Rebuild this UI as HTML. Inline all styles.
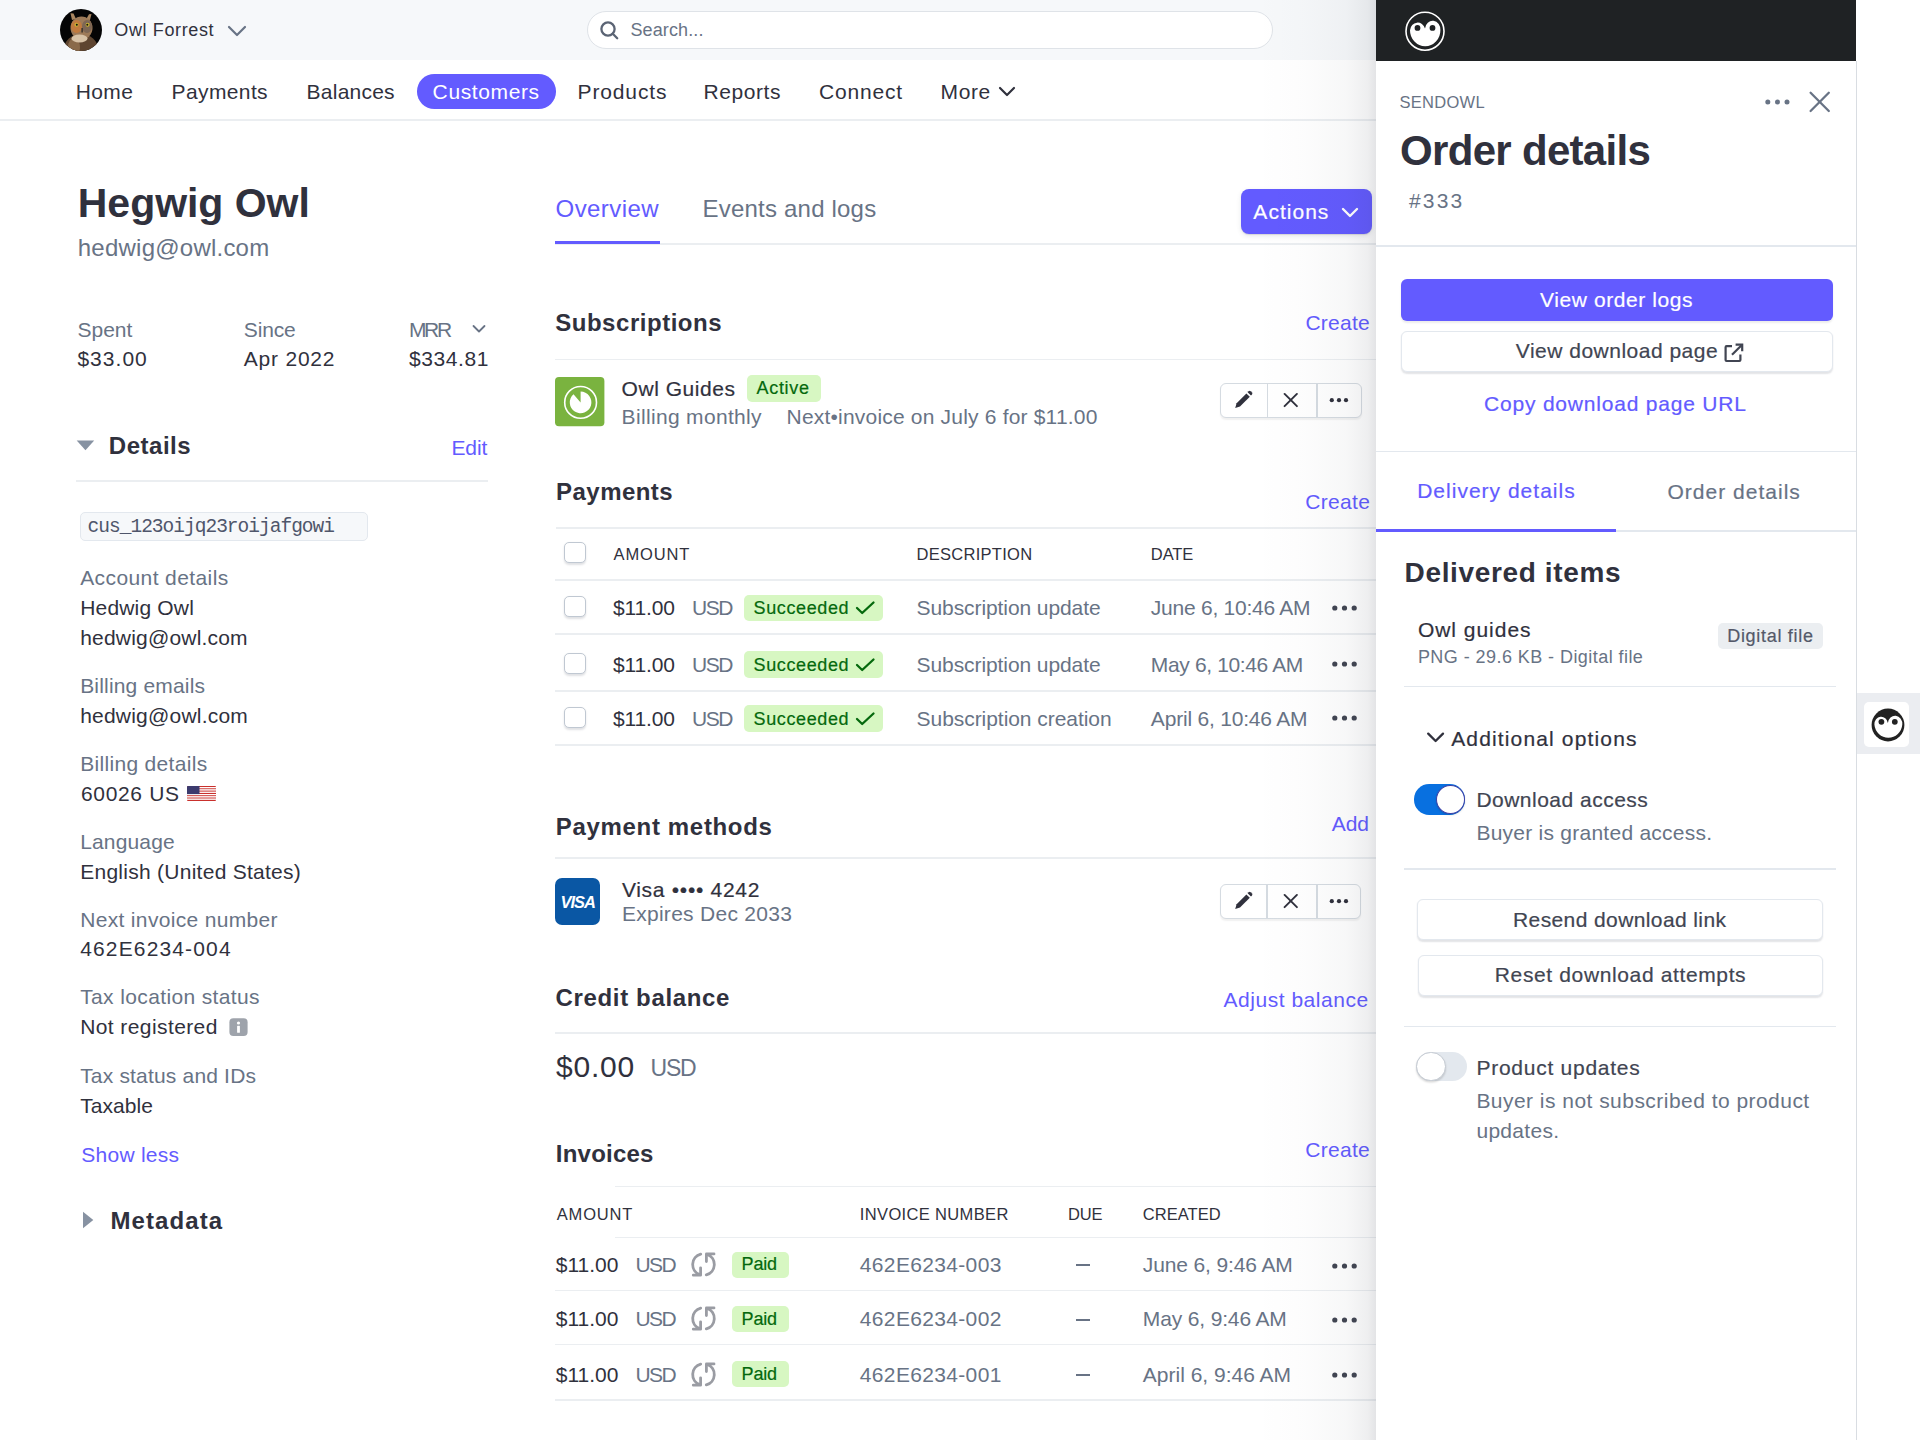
<!DOCTYPE html>
<html><head><meta charset="utf-8"><title>Customer</title>
<style>
html,body{margin:0;padding:0;width:1920px;height:1440px;overflow:hidden;background:#fff;}
body{position:relative;font-family:"Liberation Sans",sans-serif;}
.t{position:absolute;line-height:1;white-space:nowrap;}
.r{position:absolute;box-sizing:border-box;}
</style></head><body>
<div class="r" style="left:0px;top:0px;width:1376px;height:60px;background:#f6f8fa;"></div>
<svg class="r" style="left:60px;top:9px;" width="42" height="42" viewBox="0 0 42 42"><defs><clipPath id="av"><circle cx="21" cy="21" r="21"/></clipPath></defs><g clip-path="url(#av)"><rect width="42" height="42" fill="#050505"/><ellipse cx="21" cy="40" rx="17" ry="15" fill="#5e4530"/><ellipse cx="14" cy="38" rx="6" ry="9" fill="#8a6a4a"/><polygon points="10.5,4.2 13.5,4.5 16,10 12,11" fill="#a98660"/><polygon points="31.5,5 29,5.2 26,10.5 30,11" fill="#a98660"/><ellipse cx="21.5" cy="19" rx="11" ry="11.5" fill="#9d7a58"/><ellipse cx="16.5" cy="17.5" rx="5.5" ry="6.5" fill="#c07a3e"/><ellipse cx="27" cy="17.5" rx="5" ry="6.5" fill="#7d6654"/><ellipse cx="19.5" cy="29.5" rx="8" ry="4" fill="#d7c2a6"/><circle cx="16.5" cy="15.8" r="2" fill="#c8b230"/><circle cx="16.8" cy="15.8" r="1" fill="#111"/><circle cx="27.6" cy="15.8" r="2" fill="#c8b230"/><circle cx="27.3" cy="15.8" r="1" fill="#111"/><rect x="21.5" y="19" width="1.2" height="4.5" fill="#222"/></g></svg>
<div class="t" style="left:114.35px;top:20.76px;font-size:18px;color:#30313d;letter-spacing:0.620px;">Owl Forrest</div>
<svg class="r" style="left:226px;top:24px;" width="22" height="14" viewBox="0 0 22 14"><polyline points="3,3 11,11 19,3" fill="none" stroke="#687385" stroke-width="2.2" stroke-linecap="round" stroke-linejoin="round"/></svg>
<div class="r" style="left:587px;top:11px;width:686px;height:37.5px;border-radius:19px;background:#fff;border:1.5px solid #dfe3e8;"></div>
<svg class="r" style="left:598px;top:19px;" width="22" height="22" viewBox="0 0 22 22"><circle cx="10" cy="10" r="6.6" fill="none" stroke="#5b6474" stroke-width="2.3"/><line x1="14.8" y1="14.8" x2="19.2" y2="19.2" stroke="#5b6474" stroke-width="2.3" stroke-linecap="round"/></svg>
<div class="t" style="left:630.40px;top:20.66px;font-size:18px;color:#687385;letter-spacing:0.119px;">Search...</div>
<div class="r" style="left:0px;top:119px;width:1376px;height:1.5px;background:#ebeef1;"></div>
<div class="t" style="left:75.85px;top:81.42px;font-size:21px;color:#30313d;letter-spacing:0.333px;">Home</div>
<div class="t" style="left:171.60px;top:81.42px;font-size:21px;color:#30313d;letter-spacing:0.379px;">Payments</div>
<div class="t" style="left:306.60px;top:81.42px;font-size:21px;color:#30313d;letter-spacing:0.229px;">Balances</div>
<div class="r" style="left:417.4px;top:74px;width:138.6px;height:34.6px;border-radius:17.3px;background:#635bff;"></div>
<div class="t" style="left:432.60px;top:81.42px;font-size:21px;color:#fff;letter-spacing:0.625px;">Customers</div>
<div class="t" style="left:577.60px;top:81.42px;font-size:21px;color:#30313d;letter-spacing:0.850px;">Products</div>
<div class="t" style="left:703.60px;top:81.42px;font-size:21px;color:#30313d;letter-spacing:0.542px;">Reports</div>
<div class="t" style="left:818.90px;top:81.42px;font-size:21px;color:#30313d;letter-spacing:0.850px;">Connect</div>
<div class="t" style="left:940.60px;top:81.42px;font-size:21px;color:#30313d;letter-spacing:0.583px;">More</div>
<svg class="r" style="left:997px;top:85px;" width="20" height="16" viewBox="0 0 20 16"><polyline points="3,3 10,10 17,3" fill="none" stroke="#30313d" stroke-width="2.2" stroke-linecap="round" stroke-linejoin="round"/></svg>
<div class="t" style="left:77.80px;top:183.09px;font-size:41px;color:#30313d;font-weight:700;letter-spacing:-0.039px;">Hegwig Owl</div>
<div class="t" style="left:77.80px;top:235.98px;font-size:24px;color:#687385;letter-spacing:0.227px;">hedwig@owl.com</div>
<div class="t" style="left:555.60px;top:197.18px;font-size:24px;color:#635bff;letter-spacing:0.414px;">Overview</div>
<div class="t" style="left:702.60px;top:197.18px;font-size:24px;color:#687385;letter-spacing:0.200px;">Events and logs</div>
<div class="r" style="left:555px;top:243px;width:821px;height:1.5px;background:#ebeef1;"></div>
<div class="r" style="left:555px;top:241px;width:105px;height:3px;background:#635bff;"></div>
<div class="r" style="left:1240.7px;top:189px;width:131px;height:45px;border-radius:8px;background:#635bff;box-shadow:0 2px 5px rgba(60,66,87,.12),0 1px 1px rgba(0,0,0,.1);"></div>
<div class="t" style="left:1253.35px;top:201.22px;font-size:21px;color:#fff;letter-spacing:1.025px;-webkit-text-stroke:0.2px #fff;">Actions</div>
<svg class="r" style="left:1340px;top:205px;" width="20" height="16" viewBox="0 0 20 16"><polyline points="3,4 10,11 17,4" fill="none" stroke="#fff" stroke-width="2.4" stroke-linecap="round" stroke-linejoin="round"/></svg>
<div class="t" style="left:77.40px;top:318.62px;font-size:21px;color:#687385;letter-spacing:0.025px;">Spent</div>
<div class="t" style="left:77.40px;top:347.72px;font-size:21px;color:#30313d;letter-spacing:1.030px;">$33.00</div>
<div class="t" style="left:243.80px;top:318.62px;font-size:21px;color:#687385;letter-spacing:-0.137px;">Since</div>
<div class="t" style="left:243.80px;top:347.72px;font-size:21px;color:#30313d;letter-spacing:0.779px;">Apr 2022</div>
<div class="t" style="left:408.90px;top:318.62px;font-size:21px;color:#687385;letter-spacing:-2.300px;">MRR</div>
<svg class="r" style="left:471px;top:322px;" width="16" height="14" viewBox="0 0 16 14"><polyline points="2.5,4 8,9.5 13.5,4" fill="none" stroke="#687385" stroke-width="1.8" stroke-linecap="round" stroke-linejoin="round"/></svg>
<div class="t" style="left:408.90px;top:347.72px;font-size:21px;color:#30313d;letter-spacing:0.600px;">$334.81</div>
<svg class="r" style="left:76px;top:440px;" width="20" height="12" viewBox="0 0 20 12"><polygon points="0.7,0.6 18.2,0.6 9.45,10.2" fill="#8792a2"/></svg>
<div class="t" style="left:108.80px;top:434.38px;font-size:24px;color:#30313d;font-weight:700;letter-spacing:0.517px;">Details</div>
<div class="t" style="left:451.50px;top:436.92px;font-size:21px;color:#635bff;letter-spacing:-0.133px;">Edit</div>
<div class="r" style="left:76px;top:480px;width:412px;height:1.5px;background:#ebeef1;"></div>
<div class="r" style="left:80px;top:511.8px;width:288px;height:29.2px;border-radius:5px;background:#f6f8fa;border:1.5px solid #e3e8ee;"></div>
<div class="t" style="left:87.60px;top:518.06px;font-size:19.5px;color:#4f566b;font-family:'Liberation Mono',monospace;letter-spacing:-0.989px;">cus_123oijq23roijafgowi</div>
<div class="t" style="left:80.20px;top:567.22px;font-size:21px;color:#687385;letter-spacing:0.400px;">Account details</div>
<div class="t" style="left:80.20px;top:597.02px;font-size:21px;color:#30313d;letter-spacing:0.183px;">Hedwig Owl</div>
<div class="t" style="left:80.20px;top:626.82px;font-size:21px;color:#30313d;letter-spacing:0.192px;">hedwig@owl.com</div>
<div class="t" style="left:80.20px;top:675.22px;font-size:21px;color:#687385;letter-spacing:0.173px;">Billing emails</div>
<div class="t" style="left:80.20px;top:705.02px;font-size:21px;color:#30313d;letter-spacing:0.208px;">hedwig@owl.com</div>
<div class="t" style="left:80.20px;top:753.02px;font-size:21px;color:#687385;letter-spacing:0.318px;">Billing details</div>
<div class="t" style="left:81.00px;top:782.62px;font-size:21px;color:#30313d;letter-spacing:0.657px;">60026 US</div>
<svg class="r" style="left:187px;top:786px;border-radius:1px;" width="29" height="15" viewBox="0 0 29 15"><rect x="0" y="0.000" width="29" height="1.154" fill="#c9302c"/><rect x="0" y="1.154" width="29" height="1.154" fill="#fff"/><rect x="0" y="2.308" width="29" height="1.154" fill="#c9302c"/><rect x="0" y="3.462" width="29" height="1.154" fill="#fff"/><rect x="0" y="4.615" width="29" height="1.154" fill="#c9302c"/><rect x="0" y="5.769" width="29" height="1.154" fill="#fff"/><rect x="0" y="6.923" width="29" height="1.154" fill="#c9302c"/><rect x="0" y="8.077" width="29" height="1.154" fill="#fff"/><rect x="0" y="9.231" width="29" height="1.154" fill="#c9302c"/><rect x="0" y="10.385" width="29" height="1.154" fill="#fff"/><rect x="0" y="11.538" width="29" height="1.154" fill="#c9302c"/><rect x="0" y="12.692" width="29" height="1.154" fill="#fff"/><rect x="0" y="13.846" width="29" height="1.154" fill="#c9302c"/><rect x="0" y="0" width="12.5" height="8.1" fill="#3c3b6e"/></svg>
<div class="t" style="left:80.20px;top:830.82px;font-size:21px;color:#687385;letter-spacing:0.150px;">Language</div>
<div class="t" style="left:80.20px;top:860.82px;font-size:21px;color:#30313d;letter-spacing:0.266px;">English (United States)</div>
<div class="t" style="left:80.20px;top:908.62px;font-size:21px;color:#687385;letter-spacing:0.333px;">Next invoice number</div>
<div class="t" style="left:80.20px;top:938.22px;font-size:21px;color:#30313d;letter-spacing:1.145px;">462E6234-004</div>
<div class="t" style="left:80.20px;top:986.22px;font-size:21px;color:#687385;letter-spacing:0.369px;">Tax location status</div>
<div class="t" style="left:80.20px;top:1016.22px;font-size:21px;color:#30313d;letter-spacing:0.408px;">Not registered</div>
<svg class="r" style="left:229px;top:1018px;" width="19" height="18" viewBox="0 0 19 18"><rect x="0.4" y="0.3" width="18.2" height="17.7" rx="4" fill="#9ea3ab"/><circle cx="9.5" cy="5" r="1.6" fill="#fff"/><rect x="8.1" y="7.8" width="2.8" height="7" rx="0.6" fill="#fff"/></svg>
<div class="t" style="left:80.20px;top:1065.22px;font-size:21px;color:#687385;letter-spacing:0.179px;">Tax status and IDs</div>
<div class="t" style="left:80.20px;top:1095.02px;font-size:21px;color:#30313d;letter-spacing:0.067px;">Taxable</div>
<div class="t" style="left:81.30px;top:1143.92px;font-size:21px;color:#635bff;letter-spacing:0.250px;">Show less</div>
<svg class="r" style="left:82px;top:1210px;" width="13" height="20" viewBox="0 0 13 20"><polygon points="1,1.7 11.3,10 1,18.3" fill="#8792a2"/></svg>
<div class="t" style="left:110.40px;top:1208.58px;font-size:24px;color:#30313d;font-weight:700;letter-spacing:1.114px;">Metadata</div>
<div class="t" style="left:555.20px;top:311.28px;font-size:24px;color:#30313d;font-weight:700;letter-spacing:0.533px;">Subscriptions</div>
<div class="t" style="left:1305.40px;top:312.42px;font-size:21px;color:#635bff;letter-spacing:0.270px;">Create</div>
<div class="r" style="left:555px;top:358.5px;width:821px;height:1.5px;background:#ebeef1;"></div>
<svg class="r" style="left:555px;top:376.5px;" width="50" height="50" viewBox="0 0 50 50"><rect x="0" y="0" width="49.4" height="49.3" rx="4" fill="#7ab33f"/><circle cx="25.6" cy="25.4" r="15.9" fill="none" stroke="#fff" stroke-width="1.6"/><path d="M25.6 25.4 L25.6 14.599999999999998 A10.8 10.8 0 1 1 18.51 17.25 Z" fill="#fff"/></svg>
<div class="t" style="left:621.60px;top:377.52px;font-size:21px;color:#30313d;letter-spacing:0.528px;-webkit-text-stroke:0.2px #30313d;">Owl Guides</div>
<div class="r" style="left:747px;top:375px;width:73.5px;height:26.6px;border-radius:5px;background:#d7f7c2;"></div>
<div class="t" style="left:756.60px;top:378.96px;font-size:18px;color:#05690d;letter-spacing:0.660px;-webkit-text-stroke:0.2px #05690d;">Active</div>
<div class="t" style="left:621.60px;top:406.42px;font-size:21px;color:#687385;letter-spacing:0.329px;">Billing monthly</div>
<div class="t" style="left:786.60px;top:406.42px;font-size:21px;color:#687385;letter-spacing:0.192px;">Next•invoice on July 6 for $11.00</div>
<div class="r" style="left:1220px;top:383.2px;width:141.5px;height:35px;border-radius:6px;background:#fff;border:1.5px solid #d5dbe1;box-shadow:0 1.5px 1.5px rgba(0,0,0,.06);"></div>
<div class="r" style="left:1266.6px;top:383.2px;width:1.5px;height:35px;background:#d5dbe1;"></div>
<div class="r" style="left:1316.2px;top:383.2px;width:1.5px;height:35px;background:#d5dbe1;"></div>
<svg class="r" style="left:1232px;top:389.4px;" width="22" height="22" viewBox="0 0 22 22"><path d="M3.2 19 L4.6 14.2 L14.4 4.4 L17.8 7.8 L8 17.6 Z" fill="#30313d"/><path d="M15.6 3.2 L16.6 2.2 Q17.6 1.4 18.6 2.2 L20 3.6 Q20.8 4.6 20 5.6 L19 6.6 Z" fill="#30313d"/></svg>
<svg class="r" style="left:1280px;top:391.4px;" width="18" height="18" viewBox="0 0 18 18"><line x1="4.6" y1="2.9" x2="16.9" y2="15.2" stroke="#30313d" stroke-width="1.9" stroke-linecap="round"/><line x1="16.9" y1="2.9" x2="4.6" y2="15.2" stroke="#30313d" stroke-width="1.9" stroke-linecap="round"/></svg>
<svg class="r" style="left:1324px;top:395.4px;" width="30" height="10" viewBox="0 0 30 10"><circle cx="7.8" cy="5.2" r="2.1" fill="#30313d"/><circle cx="15" cy="5.2" r="2.1" fill="#30313d"/><circle cx="22" cy="5.2" r="2.1" fill="#30313d"/></svg>
<div class="t" style="left:556.10px;top:480.48px;font-size:24px;color:#30313d;font-weight:700;letter-spacing:0.443px;">Payments</div>
<div class="t" style="left:1305.30px;top:490.97px;font-size:21px;color:#635bff;letter-spacing:0.310px;">Create</div>
<div class="r" style="left:556px;top:527px;width:820px;height:1.5px;background:#ebeef1;"></div>
<div class="r" style="left:563.5px;top:541.6px;width:22px;height:21.4px;border-radius:5px;background:#fff;border:1.5px solid #c0c8d2;box-shadow:0 1.5px 2px rgba(60,66,87,.16);"></div>
<div class="t" style="left:613.60px;top:545.83px;font-size:16.5px;color:#30313d;letter-spacing:0.840px;">AMOUNT</div>
<div class="t" style="left:916.60px;top:546.03px;font-size:16.5px;color:#30313d;letter-spacing:0.275px;">DESCRIPTION</div>
<div class="t" style="left:1150.85px;top:546.03px;font-size:16.5px;color:#30313d;letter-spacing:-0.100px;">DATE</div>
<div class="r" style="left:555px;top:579px;width:821px;height:1.5px;background:#ebeef1;"></div>
<div class="r" style="left:563.5px;top:596px;width:22px;height:21.4px;border-radius:5px;background:#fff;border:1.5px solid #c0c8d2;box-shadow:0 1.5px 2px rgba(60,66,87,.16);"></div>
<div class="t" style="left:613.00px;top:597.22px;font-size:21px;color:#30313d;letter-spacing:-0.130px;">$11.00</div>
<div class="t" style="left:692.10px;top:597.22px;font-size:21px;color:#687385;letter-spacing:-1.525px;">USD</div>
<div class="r" style="left:744px;top:594.6px;width:139.4px;height:26.4px;border-radius:5px;background:#d7f7c2;"></div>
<div class="t" style="left:753.60px;top:598.76px;font-size:18px;color:#05690d;letter-spacing:0.619px;-webkit-text-stroke:0.2px #05690d;">Succeeded</div>
<svg class="r" style="left:854px;top:600px;" width="22" height="16" viewBox="0 0 22 16"><polyline points="3,8 8.2,13 19.5,2.5" fill="none" stroke="#05690d" stroke-width="2.3" stroke-linecap="round" stroke-linejoin="round"/></svg>
<div class="t" style="left:916.60px;top:597.22px;font-size:21px;color:#687385;letter-spacing:-0.089px;">Subscription update</div>
<div class="t" style="left:1150.85px;top:597.22px;font-size:21px;color:#687385;letter-spacing:-0.247px;">June 6, 10:46 AM</div>
<svg class="r" style="left:1331.5px;top:603.5px;" width="26" height="8" viewBox="0 0 26 8"><circle cx="2.8" cy="4" r="2.6" fill="#414552"/><circle cx="12.5" cy="4" r="2.6" fill="#414552"/><circle cx="22.2" cy="4" r="2.6" fill="#414552"/></svg>
<div class="r" style="left:555px;top:633.2px;width:821px;height:1.5px;background:#ebeef1;"></div>
<div class="r" style="left:563.5px;top:652.75px;width:22px;height:21.4px;border-radius:5px;background:#fff;border:1.5px solid #c0c8d2;box-shadow:0 1.5px 2px rgba(60,66,87,.16);"></div>
<div class="t" style="left:613.00px;top:653.97px;font-size:21px;color:#30313d;letter-spacing:-0.130px;">$11.00</div>
<div class="t" style="left:692.10px;top:653.97px;font-size:21px;color:#687385;letter-spacing:-1.525px;">USD</div>
<div class="r" style="left:744px;top:651.35px;width:139.4px;height:26.4px;border-radius:5px;background:#d7f7c2;"></div>
<div class="t" style="left:753.60px;top:655.51px;font-size:18px;color:#05690d;letter-spacing:0.619px;-webkit-text-stroke:0.2px #05690d;">Succeeded</div>
<svg class="r" style="left:854px;top:656.75px;" width="22" height="16" viewBox="0 0 22 16"><polyline points="3,8 8.2,13 19.5,2.5" fill="none" stroke="#05690d" stroke-width="2.3" stroke-linecap="round" stroke-linejoin="round"/></svg>
<div class="t" style="left:916.60px;top:653.97px;font-size:21px;color:#687385;letter-spacing:-0.089px;">Subscription update</div>
<div class="t" style="left:1150.85px;top:653.97px;font-size:21px;color:#687385;letter-spacing:-0.364px;">May 6, 10:46 AM</div>
<svg class="r" style="left:1331.5px;top:660.25px;" width="26" height="8" viewBox="0 0 26 8"><circle cx="2.8" cy="4" r="2.6" fill="#414552"/><circle cx="12.5" cy="4" r="2.6" fill="#414552"/><circle cx="22.2" cy="4" r="2.6" fill="#414552"/></svg>
<div class="r" style="left:555px;top:690.2px;width:821px;height:1.5px;background:#ebeef1;"></div>
<div class="r" style="left:563.5px;top:706.75px;width:22px;height:21.4px;border-radius:5px;background:#fff;border:1.5px solid #c0c8d2;box-shadow:0 1.5px 2px rgba(60,66,87,.16);"></div>
<div class="t" style="left:613.00px;top:707.97px;font-size:21px;color:#30313d;letter-spacing:-0.130px;">$11.00</div>
<div class="t" style="left:692.10px;top:707.97px;font-size:21px;color:#687385;letter-spacing:-1.525px;">USD</div>
<div class="r" style="left:744px;top:705.35px;width:139.4px;height:26.4px;border-radius:5px;background:#d7f7c2;"></div>
<div class="t" style="left:753.60px;top:709.51px;font-size:18px;color:#05690d;letter-spacing:0.619px;-webkit-text-stroke:0.2px #05690d;">Succeeded</div>
<svg class="r" style="left:854px;top:710.75px;" width="22" height="16" viewBox="0 0 22 16"><polyline points="3,8 8.2,13 19.5,2.5" fill="none" stroke="#05690d" stroke-width="2.3" stroke-linecap="round" stroke-linejoin="round"/></svg>
<div class="t" style="left:916.60px;top:707.97px;font-size:21px;color:#687385;letter-spacing:-0.055px;">Subscription creation</div>
<div class="t" style="left:1150.85px;top:707.97px;font-size:21px;color:#687385;letter-spacing:-0.197px;">April 6, 10:46 AM</div>
<svg class="r" style="left:1331.5px;top:714.25px;" width="26" height="8" viewBox="0 0 26 8"><circle cx="2.8" cy="4" r="2.6" fill="#414552"/><circle cx="12.5" cy="4" r="2.6" fill="#414552"/><circle cx="22.2" cy="4" r="2.6" fill="#414552"/></svg>
<div class="r" style="left:555px;top:744px;width:821px;height:1.5px;background:#ebeef1;"></div>
<div class="t" style="left:555.85px;top:815.28px;font-size:24px;color:#30313d;font-weight:700;letter-spacing:0.664px;">Payment methods</div>
<div class="t" style="left:1331.80px;top:813.22px;font-size:21px;color:#635bff;letter-spacing:-0.075px;">Add</div>
<div class="r" style="left:555px;top:857px;width:821px;height:1.5px;background:#ebeef1;"></div>
<div class="r" style="left:555.2px;top:877.7px;width:45.3px;height:47.8px;border-radius:7px;background:#0a57a4;"></div>
<div class="t" style="left:560.5px;top:893.7px;font-size:16.5px;font-weight:700;font-style:italic;color:#fff;letter-spacing:-1px;">VISA</div>
<div class="t" style="left:621.90px;top:879.12px;font-size:21px;color:#30313d;letter-spacing:0.712px;-webkit-text-stroke:0.2px #30313d;">Visa •••• 4242</div>
<div class="t" style="left:621.90px;top:902.52px;font-size:21px;color:#687385;letter-spacing:0.283px;">Expires Dec 2033</div>
<div class="r" style="left:1219.8px;top:884px;width:141.5px;height:35px;border-radius:6px;background:#fff;border:1.5px solid #d5dbe1;box-shadow:0 1.5px 1.5px rgba(0,0,0,.06);"></div>
<div class="r" style="left:1266.3999999999999px;top:884px;width:1.5px;height:35px;background:#d5dbe1;"></div>
<div class="r" style="left:1316.0px;top:884px;width:1.5px;height:35px;background:#d5dbe1;"></div>
<svg class="r" style="left:1231.8px;top:890.2px;" width="22" height="22" viewBox="0 0 22 22"><path d="M3.2 19 L4.6 14.2 L14.4 4.4 L17.8 7.8 L8 17.6 Z" fill="#30313d"/><path d="M15.6 3.2 L16.6 2.2 Q17.6 1.4 18.6 2.2 L20 3.6 Q20.8 4.6 20 5.6 L19 6.6 Z" fill="#30313d"/></svg>
<svg class="r" style="left:1279.8px;top:892.2px;" width="18" height="18" viewBox="0 0 18 18"><line x1="4.6" y1="2.9" x2="16.9" y2="15.2" stroke="#30313d" stroke-width="1.9" stroke-linecap="round"/><line x1="16.9" y1="2.9" x2="4.6" y2="15.2" stroke="#30313d" stroke-width="1.9" stroke-linecap="round"/></svg>
<svg class="r" style="left:1323.8px;top:896.2px;" width="30" height="10" viewBox="0 0 30 10"><circle cx="7.8" cy="5.2" r="2.1" fill="#30313d"/><circle cx="15" cy="5.2" r="2.1" fill="#30313d"/><circle cx="22" cy="5.2" r="2.1" fill="#30313d"/></svg>
<div class="t" style="left:555.60px;top:986.18px;font-size:24px;color:#30313d;font-weight:700;letter-spacing:0.642px;">Credit balance</div>
<div class="t" style="left:1223.60px;top:988.62px;font-size:21px;color:#635bff;letter-spacing:0.519px;">Adjust balance</div>
<div class="r" style="left:555px;top:1032px;width:821px;height:1.5px;background:#ebeef1;"></div>
<div class="t" style="left:556.10px;top:1051.50px;font-size:30px;color:#30313d;letter-spacing:0.738px;">$0.00</div>
<div class="t" style="left:650.60px;top:1057.43px;font-size:23px;color:#687385;letter-spacing:-1.275px;">USD</div>
<div class="t" style="left:555.85px;top:1141.58px;font-size:24px;color:#30313d;font-weight:700;letter-spacing:0.207px;">Invoices</div>
<div class="t" style="left:1305.30px;top:1138.62px;font-size:21px;color:#635bff;letter-spacing:0.270px;">Create</div>
<div class="r" style="left:615px;top:1185.5px;width:761px;height:1.5px;background:#ebeef1;"></div>
<div class="t" style="left:556.80px;top:1206.03px;font-size:16.5px;color:#30313d;letter-spacing:0.800px;">AMOUNT</div>
<div class="t" style="left:859.85px;top:1206.03px;font-size:16.5px;color:#30313d;letter-spacing:0.350px;">INVOICE NUMBER</div>
<div class="t" style="left:1067.90px;top:1206.03px;font-size:16.5px;color:#30313d;letter-spacing:-0.075px;">DUE</div>
<div class="t" style="left:1142.80px;top:1206.03px;font-size:16.5px;color:#30313d;letter-spacing:0.033px;">CREATED</div>
<div class="r" style="left:615px;top:1236.8px;width:761px;height:1.5px;background:#ebeef1;"></div>
<div class="t" style="left:555.85px;top:1254.22px;font-size:21px;color:#30313d;letter-spacing:-0.030px;">$11.00</div>
<div class="t" style="left:635.60px;top:1254.22px;font-size:21px;color:#687385;letter-spacing:-1.675px;">USD</div>
<svg class="r" style="left:685px;top:1248px;" width="40" height="34" viewBox="0 0 40 34"><g fill="none" stroke="#9a9ca3" stroke-width="2.8" stroke-linecap="round" stroke-linejoin="round"><path d="M15.7 6.1 A10.8 10.8 0 0 0 14.6 26.6"/><polyline points="8.3,27.2 15.6,27.2 15.6,19.8"/><path d="M21.3 26.9 A10.8 10.8 0 0 0 22.4 6.4"/><polyline points="21.4,13.6 21.4,5.9 29,5.9"/></g></svg>
<div class="r" style="left:732.1px;top:1251.5px;width:56.6px;height:26.2px;border-radius:5px;background:#d7f7c2;"></div>
<div class="t" style="left:741.60px;top:1255.36px;font-size:18px;color:#05690d;letter-spacing:-0.183px;-webkit-text-stroke:0.2px #05690d;">Paid</div>
<div class="t" style="left:859.85px;top:1254.22px;font-size:21px;color:#687385;letter-spacing:0.336px;">462E6234-003</div>
<div class="r" style="left:1075.7px;top:1264px;width:14.6px;height:1.5px;background:#687385;"></div>
<div class="t" style="left:1142.80px;top:1254.22px;font-size:21px;color:#687385;letter-spacing:-0.125px;">June 6, 9:46 AM</div>
<svg class="r" style="left:1331.5px;top:1261.8px;" width="26" height="8" viewBox="0 0 26 8"><circle cx="2.8" cy="4" r="2.6" fill="#414552"/><circle cx="12.5" cy="4" r="2.6" fill="#414552"/><circle cx="22.2" cy="4" r="2.6" fill="#414552"/></svg>
<div class="r" style="left:555px;top:1289.5px;width:821px;height:1.5px;background:#ebeef1;"></div>
<div class="t" style="left:555.85px;top:1308.42px;font-size:21px;color:#30313d;letter-spacing:-0.030px;">$11.00</div>
<div class="t" style="left:635.60px;top:1308.42px;font-size:21px;color:#687385;letter-spacing:-1.675px;">USD</div>
<svg class="r" style="left:685px;top:1302.2px;" width="40" height="34" viewBox="0 0 40 34"><g fill="none" stroke="#9a9ca3" stroke-width="2.8" stroke-linecap="round" stroke-linejoin="round"><path d="M15.7 6.1 A10.8 10.8 0 0 0 14.6 26.6"/><polyline points="8.3,27.2 15.6,27.2 15.6,19.8"/><path d="M21.3 26.9 A10.8 10.8 0 0 0 22.4 6.4"/><polyline points="21.4,13.6 21.4,5.9 29,5.9"/></g></svg>
<div class="r" style="left:732.1px;top:1305.7px;width:56.6px;height:26.2px;border-radius:5px;background:#d7f7c2;"></div>
<div class="t" style="left:741.60px;top:1309.56px;font-size:18px;color:#05690d;letter-spacing:-0.183px;-webkit-text-stroke:0.2px #05690d;">Paid</div>
<div class="t" style="left:859.85px;top:1308.42px;font-size:21px;color:#687385;letter-spacing:0.336px;">462E6234-002</div>
<div class="r" style="left:1075.7px;top:1319px;width:14.6px;height:1.5px;background:#687385;"></div>
<div class="t" style="left:1142.80px;top:1308.42px;font-size:21px;color:#687385;letter-spacing:-0.146px;">May 6, 9:46 AM</div>
<svg class="r" style="left:1331.5px;top:1316.0px;" width="26" height="8" viewBox="0 0 26 8"><circle cx="2.8" cy="4" r="2.6" fill="#414552"/><circle cx="12.5" cy="4" r="2.6" fill="#414552"/><circle cx="22.2" cy="4" r="2.6" fill="#414552"/></svg>
<div class="r" style="left:555px;top:1343.8px;width:821px;height:1.5px;background:#ebeef1;"></div>
<div class="t" style="left:555.85px;top:1363.82px;font-size:21px;color:#30313d;letter-spacing:-0.030px;">$11.00</div>
<div class="t" style="left:635.60px;top:1363.82px;font-size:21px;color:#687385;letter-spacing:-1.675px;">USD</div>
<svg class="r" style="left:685px;top:1357.6px;" width="40" height="34" viewBox="0 0 40 34"><g fill="none" stroke="#9a9ca3" stroke-width="2.8" stroke-linecap="round" stroke-linejoin="round"><path d="M15.7 6.1 A10.8 10.8 0 0 0 14.6 26.6"/><polyline points="8.3,27.2 15.6,27.2 15.6,19.8"/><path d="M21.3 26.9 A10.8 10.8 0 0 0 22.4 6.4"/><polyline points="21.4,13.6 21.4,5.9 29,5.9"/></g></svg>
<div class="r" style="left:732.1px;top:1361.1px;width:56.6px;height:26.2px;border-radius:5px;background:#d7f7c2;"></div>
<div class="t" style="left:741.60px;top:1364.96px;font-size:18px;color:#05690d;letter-spacing:-0.183px;-webkit-text-stroke:0.2px #05690d;">Paid</div>
<div class="t" style="left:859.85px;top:1363.82px;font-size:21px;color:#687385;letter-spacing:0.336px;">462E6234-001</div>
<div class="r" style="left:1075.7px;top:1374px;width:14.6px;height:1.5px;background:#687385;"></div>
<div class="t" style="left:1142.80px;top:1363.82px;font-size:21px;color:#687385;">April 6, 9:46 AM</div>
<svg class="r" style="left:1331.5px;top:1371.3999999999999px;" width="26" height="8" viewBox="0 0 26 8"><circle cx="2.8" cy="4" r="2.6" fill="#414552"/><circle cx="12.5" cy="4" r="2.6" fill="#414552"/><circle cx="22.2" cy="4" r="2.6" fill="#414552"/></svg>
<div class="r" style="left:555px;top:1399.3px;width:821px;height:1.5px;background:#ebeef1;"></div>
<div class="r" style="left:1256px;top:0;width:120px;height:1440px;background:linear-gradient(to right,rgba(40,45,60,0) 0%,rgba(40,45,60,0.012) 40%,rgba(40,45,60,0.035) 75%,rgba(40,45,60,0.08) 93%,rgba(40,45,60,0.13) 100%);"></div>
<div class="r" style="left:1375.5px;top:0px;width:481px;height:1440px;background:#fff;"></div>
<div class="r" style="left:1375.5px;top:0px;width:480.5px;height:61px;background:#1f2224;"></div>
<svg class="r" style="left:1405px;top:11px;" width="40" height="40" viewBox="0 0 40 40"><circle cx="20" cy="20.2" r="19" fill="none" stroke="#fff" stroke-width="1.6"/><path d="M5 19.3 A7.7 8.6 0 0 1 20 17.6 A7.7 8.6 0 0 1 35.4 19.3 A15.2 16 0 0 1 5 19.3 Z" fill="#fff"/><circle cx="12.5" cy="16.9" r="2.9" fill="#1f2224"/><circle cx="27.5" cy="16.9" r="2.9" fill="#1f2224"/></svg>
<div class="r" style="left:1855.5px;top:61px;width:1.5px;height:1379px;background:#d9dde2;"></div>
<div class="t" style="left:1399.60px;top:94.03px;font-size:16.5px;color:#687385;letter-spacing:0.258px;">SENDOWL</div>
<svg class="r" style="left:1763px;top:97px;" width="30" height="10" viewBox="0 0 30 10"><circle cx="4.8" cy="5" r="2.5" fill="#687385"/><circle cx="14.5" cy="5" r="2.5" fill="#687385"/><circle cx="24" cy="5" r="2.5" fill="#687385"/></svg>
<svg class="r" style="left:1808px;top:90px;" width="24" height="24" viewBox="0 0 24 24"><line x1="2.6" y1="2.8" x2="20.8" y2="21" stroke="#687385" stroke-width="2.3" stroke-linecap="round"/><line x1="20.8" y1="2.8" x2="2.6" y2="21" stroke="#687385" stroke-width="2.3" stroke-linecap="round"/></svg>
<div class="t" style="left:1400.10px;top:129.94px;font-size:42px;color:#30313d;font-weight:700;letter-spacing:-0.696px;">Order details</div>
<div class="t" style="left:1409.10px;top:190.22px;font-size:21px;color:#687385;letter-spacing:2.100px;">#333</div>
<div class="r" style="left:1376px;top:245px;width:480px;height:1.5px;background:#e3e8ee;"></div>
<div class="r" style="left:1401.25px;top:279.25px;width:431.75px;height:41.25px;border-radius:6px;background:#635bff;box-shadow:0 1.5px 2px rgba(0,0,0,.08);"></div>
<div class="t" style="left:1540.10px;top:289.22px;font-size:21px;color:#fff;letter-spacing:0.582px;-webkit-text-stroke:0.2px #fff;">View order logs</div>
<div class="r" style="left:1401.25px;top:331.25px;width:431.75px;height:40.5px;border-radius:6px;background:#fff;border:1.5px solid #e3e8ee;box-shadow:0 1.5px 1.5px rgba(60,66,87,.14);"></div>
<div class="t" style="left:1515.85px;top:340.47px;font-size:21px;color:#414552;letter-spacing:0.488px;-webkit-text-stroke:0.2px #414552;">View download page</div>
<svg class="r" style="left:1723px;top:342px;" width="22" height="22" viewBox="0 0 22 22"><path d="M9 4.2 H3.6 Q2.6 4.2 2.6 5.2 V18 Q2.6 19 3.6 19 H16.4 Q17.4 19 17.4 18 V12.6" fill="none" stroke="#414552" stroke-width="2.2"/><line x1="9" y1="12.8" x2="18.6" y2="3.2" stroke="#414552" stroke-width="2.2"/><polyline points="12.6,2.6 19.2,2.6 19.2,9.2" fill="none" stroke="#414552" stroke-width="2.2"/></svg>
<div class="t" style="left:1484.10px;top:392.97px;font-size:21px;color:#635bff;letter-spacing:0.790px;-webkit-text-stroke:0.2px #635bff;">Copy download page URL</div>
<div class="r" style="left:1376px;top:450.5px;width:480px;height:1.5px;background:#e3e8ee;"></div>
<div class="t" style="left:1417.20px;top:480.12px;font-size:21px;color:#635bff;letter-spacing:1.007px;-webkit-text-stroke:0.2px #635bff;">Delivery details</div>
<div class="t" style="left:1667.50px;top:481.42px;font-size:21px;color:#687385;letter-spacing:1.008px;-webkit-text-stroke:0.2px #687385;">Order details</div>
<div class="r" style="left:1376px;top:530px;width:480px;height:1.5px;background:#e3e8ee;"></div>
<div class="r" style="left:1376px;top:529.4px;width:239.5px;height:3px;background:#635bff;"></div>
<div class="t" style="left:1404.60px;top:559.40px;font-size:28px;color:#30313d;font-weight:700;letter-spacing:0.643px;">Delivered items</div>
<div class="t" style="left:1417.90px;top:619.22px;font-size:21px;color:#30313d;letter-spacing:0.978px;-webkit-text-stroke:0.2px #30313d;">Owl guides</div>
<div class="t" style="left:1417.90px;top:647.76px;font-size:18px;color:#687385;letter-spacing:0.441px;">PNG - 29.6 KB - Digital file</div>
<div class="r" style="left:1717.6px;top:622.7px;width:105.8px;height:26.4px;border-radius:5px;background:#ebeef1;"></div>
<div class="t" style="left:1727.20px;top:626.86px;font-size:18px;color:#545969;letter-spacing:0.705px;-webkit-text-stroke:0.2px #545969;">Digital file</div>
<div class="r" style="left:1404px;top:685.5px;width:432px;height:1.5px;background:#e3e8ee;"></div>
<svg class="r" style="left:1425px;top:729px;" width="22" height="18" viewBox="0 0 22 18"><polyline points="3.2,4.6 10.6,12 18,4.6" fill="none" stroke="#30313d" stroke-width="2.3" stroke-linecap="round" stroke-linejoin="round"/></svg>
<div class="t" style="left:1451.20px;top:728.12px;font-size:21px;color:#30313d;letter-spacing:1.147px;-webkit-text-stroke:0.2px #30313d;">Additional options</div>
<div class="r" style="left:1414.3px;top:784.4px;width:51.2px;height:30.3px;border-radius:15.2px;background:#0870e0;"></div>
<div class="r" style="left:1435.9px;top:784.6px;width:29.3px;height:29.9px;border-radius:50%;background:#fff;border:1.6px solid #3a40a8;box-shadow:0 1px 2px rgba(0,0,0,.15);"></div>
<div class="t" style="left:1476.40px;top:789.32px;font-size:21px;color:#414552;letter-spacing:0.486px;-webkit-text-stroke:0.2px #414552;">Download access</div>
<div class="t" style="left:1476.40px;top:822.12px;font-size:21px;color:#687385;letter-spacing:0.250px;">Buyer is granted access.</div>
<div class="r" style="left:1404px;top:868.2px;width:432px;height:1.5px;background:#e3e8ee;"></div>
<div class="r" style="left:1416.8px;top:899.4px;width:406.6px;height:41.1px;border-radius:6px;background:#fff;border:1.5px solid #e3e8ee;box-shadow:0 1.5px 1.5px rgba(60,66,87,.14);"></div>
<div class="t" style="left:1513.00px;top:908.82px;font-size:21px;color:#414552;letter-spacing:0.395px;-webkit-text-stroke:0.2px #414552;">Resend download link</div>
<div class="r" style="left:1418.3px;top:954.9px;width:405.1px;height:41.1px;border-radius:6px;background:#fff;border:1.5px solid #e3e8ee;box-shadow:0 1.5px 1.5px rgba(60,66,87,.14);"></div>
<div class="t" style="left:1494.80px;top:964.32px;font-size:21px;color:#414552;letter-spacing:0.630px;-webkit-text-stroke:0.2px #414552;">Reset download attempts</div>
<div class="r" style="left:1404px;top:1025.5px;width:432px;height:1.5px;background:#e3e8ee;"></div>
<div class="r" style="left:1416.3px;top:1051.9px;width:50.4px;height:29.3px;border-radius:14.7px;background:#e3e8ee;"></div>
<div class="r" style="left:1416.3px;top:1051.9px;width:29.3px;height:29.3px;border-radius:50%;background:#fff;border:1.2px solid #c4cad2;box-shadow:0 1.5px 2px rgba(0,0,0,.15);"></div>
<div class="t" style="left:1476.40px;top:1056.82px;font-size:21px;color:#414552;letter-spacing:0.746px;-webkit-text-stroke:0.2px #414552;">Product updates</div>
<div class="t" style="left:1476.40px;top:1090.32px;font-size:21px;color:#687385;letter-spacing:0.464px;">Buyer is not subscribed to product</div>
<div class="t" style="left:1476.40px;top:1119.82px;font-size:21px;color:#687385;letter-spacing:0.307px;">updates.</div>
<div class="r" style="left:1857px;top:693px;width:63px;height:61px;background:#ebedf1;"></div>
<div class="r" style="left:1864.4px;top:702px;width:45px;height:45px;border-radius:5px;background:#fff;"></div>
<svg class="r" style="left:1869.6px;top:707.2px;" width="36" height="36" viewBox="0 0 36 36"><circle cx="18" cy="18" r="16.4" fill="#222"/><path d="M4.4 17.6 A6.8 7.6 0 0 1 17.9 16 A6.8 7.6 0 0 1 32.3 17.6 A14 14.4 0 0 1 4.4 17.6 Z" fill="#fff"/><circle cx="11.4" cy="14.8" r="2.9" fill="#222"/><circle cx="24.8" cy="14.8" r="2.9" fill="#222"/></svg>
</body></html>
